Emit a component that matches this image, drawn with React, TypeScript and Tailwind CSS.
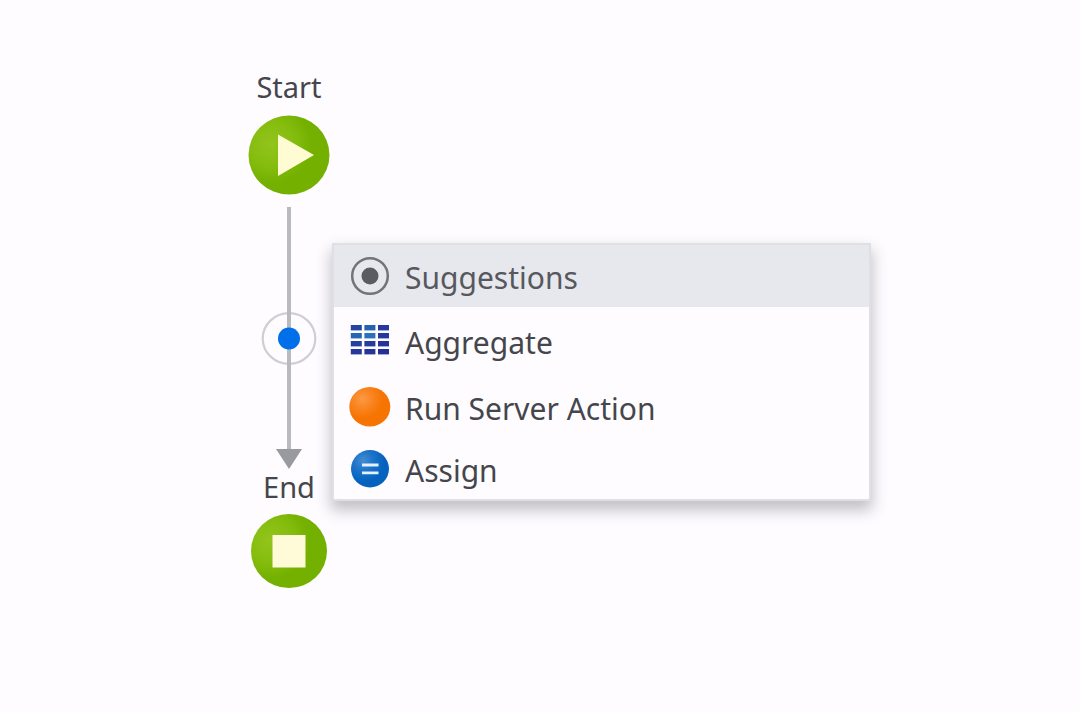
import { useState } from "react";
import type { ReactNode } from "react";

function StartIcon() {
  return (
    <svg viewBox="0 0 82 80" className="h-20 w-[82px]" aria-hidden="true">
      <defs>
        <radialGradient id="start-fill" cx="0.28" cy="0.36" r="0.5">
          <stop offset="0" stopColor="#93c41d" />
          <stop offset="0.6" stopColor="#84bc0d" />
          <stop offset="1" stopColor="#73b000" />
        </radialGradient>
      </defs>
      <ellipse cx="41" cy="40" rx="40.5" ry="39.5" fill="url(#start-fill)" />
      <path d="M30 19.5V61L66 40Z" fill="#fffbd3" />
    </svg>
  );
}

function EndIcon() {
  return (
    <svg viewBox="0 0 78 74" className="h-[74px] w-[78px]" aria-hidden="true">
      <defs>
        <radialGradient id="end-fill" cx="0.25" cy="0.36" r="0.52">
          <stop offset="0" stopColor="#93c41d" />
          <stop offset="0.6" stopColor="#84bc0d" />
          <stop offset="1" stopColor="#73b000" />
        </radialGradient>
      </defs>
      <ellipse cx="39" cy="37" rx="38" ry="37" fill="url(#end-fill)" />
      <rect x="22.5" y="21" width="33" height="32.5" fill="#fffbd8" />
    </svg>
  );
}

function Connector() {
  return (
    <svg viewBox="0 0 56 262" className="h-[262px] w-14" aria-hidden="true">
      <ellipse cx="28" cy="131.5" rx="26.3" ry="25.3" fill="#fefcff" stroke="#cfcfd2" strokeWidth="2.2" />
      <path d="M28 0V244" stroke="#b9babe" strokeWidth="4" />
      <circle cx="28" cy="131.5" r="11" fill="#0070ea" />
      <path d="M15 242H41L28 262Z" fill="#989a9f" />
    </svg>
  );
}

function SuggestionsIcon() {
  return (
    <svg viewBox="0 0 42 42" className="size-[42px]" aria-hidden="true">
      <circle cx="21" cy="21" r="17.8" fill="none" stroke="#737479" strokeWidth="2.5" />
      <circle cx="21" cy="21" r="8.5" fill="#5b5c62" />
    </svg>
  );
}

const gridColors = [
  ["#2445a5", "#2361b1", "#2638a0"],
  ["#2465b5", "#2b70bc", "#24389e"],
  ["#27409f", "#263ba0", "#26339b"],
  ["#26389e", "#25349c", "#24309a"],
];

function AggregateIcon() {
  return (
    <svg viewBox="0 0 42 42" className="size-[42px]" aria-hidden="true">
      {gridColors.map((row, r) =>
        row.map((color, c) => (
          <rect key={`${r}-${c}`} x={1.8 + c * 13.6} y={5 + r * 8} width="11" height="5.4" fill={color} />
        ))
      )}
    </svg>
  );
}

function ServerActionIcon() {
  return (
    <svg viewBox="0 0 42 42" className="size-[42px]" aria-hidden="true">
      <defs>
        <radialGradient id="action-fill" cx="0.32" cy="0.3" r="0.5">
          <stop offset="0" stopColor="#fb9a45" />
          <stop offset="0.5" stopColor="#fa8420" />
          <stop offset="1" stopColor="#f57402" />
        </radialGradient>
      </defs>
      <ellipse cx="20.8" cy="20.8" rx="20.5" ry="19.8" fill="url(#action-fill)" />
    </svg>
  );
}

function AssignIcon() {
  return (
    <svg viewBox="0 0 42 42" className="size-[42px]" aria-hidden="true">
      <defs>
        <radialGradient id="assign-fill" cx="0.32" cy="0.28" r="0.55">
          <stop offset="0" stopColor="#438dd2" />
          <stop offset="0.5" stopColor="#1c73c9" />
          <stop offset="1" stopColor="#0563bf" />
        </radialGradient>
      </defs>
      <ellipse cx="21" cy="20.8" rx="19" ry="18.7" fill="url(#assign-fill)" />
      <path d="M13 17H29.5M13 24.8H29.5" stroke="#e4f0fb" strokeWidth="2.8" />
    </svg>
  );
}

type Item = { label: string; icon: ReactNode; height: string };

const items: Item[] = [
  { label: "Aggregate", icon: <AggregateIcon />, height: "h-[68px]" },
  { label: "Run Server Action", icon: <ServerActionIcon />, height: "h-16" },
  { label: "Assign", icon: <AssignIcon />, height: "h-[60px]" },
];

export default function App() {
  const [selected, setSelected] = useState<string | null>(null);

  return (
    <main className="flex min-h-screen items-start bg-[#fefcff] pt-[71px] pl-[248px] font-['Noto_Sans','Open_Sans',sans-serif] text-[29px] leading-8 text-[#45464c]">
      <div className="flex w-[82px] shrink-0 flex-col items-center">
        <span>Start</span>
        <div className="mt-3">
          <StartIcon />
        </div>
        <div className="mt-3">
          <Connector />
        </div>
        <span className="mt-0.5">End</span>
        <div className="mt-[11px]">
          <EndIcon />
        </div>
      </div>

      <section className="mt-[172px] mr-4 ml-0.5 w-full max-w-[539px] border-2 border-[#dfe0e4] bg-[#fefcff] text-[30px] shadow-[0_8px_14px_1px_rgba(50,50,60,0.3)]">
        <h2 className="flex h-[62px] items-center gap-3.5 bg-[#e6e8ed] pl-[15px] text-[#57585e]">
          <SuggestionsIcon />
          <span className="pt-1">Suggestions</span>
        </h2>
        <ul>
          {items.map((item) => (
            <li key={item.label}>
              <button
                type="button"
                aria-pressed={selected === item.label}
                onClick={() => setSelected(item.label)}
                className={`flex w-full items-center gap-3.5 pl-[15px] text-left ${item.height}`}
              >
                {item.icon}
                <span className="pt-1">{item.label}</span>
              </button>
            </li>
          ))}
        </ul>
      </section>
    </main>
  );
}
